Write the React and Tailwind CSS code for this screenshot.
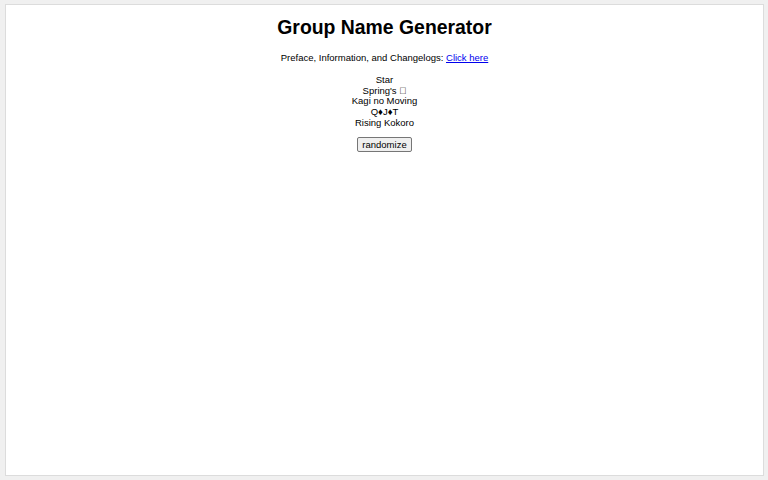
export default function App() {
  return (
    <div className="h-[480px] w-[768px] bg-[#f0f0f0] pt-[4px] pl-[5px] pr-[4px] pb-[4px] font-['Liberation_Sans',Arial,sans-serif] text-black">
      <div className="h-[472px] border border-[#dcdcdc] bg-white flex flex-col items-center text-[9.5px] leading-[10.75px]">
        <h1 className="mt-[11px] text-[19.4px] leading-[23px] font-bold">Group Name Generator</h1>
        <p className="mt-[14px]">
          Preface, Information, and Changelogs:{" "}
          <a href="#" className="text-[#0000ee] underline">Click here</a>
        </p>
        <div className="mt-[11px] flex flex-col items-center">
          <div>Star</div>
          <div>Spring's {"\uE000"}</div>
          <div>Kagi no Moving</div>
          <div>Q♦J♦T</div>
          <div>Rising Kokoro</div>
        </div>
        <button className="mt-[8px] px-[4px] h-[15px] border border-[#767676] rounded-[2px] bg-[#efefef] text-[9.5px] leading-[11px]">randomize</button>
      </div>
    </div>
  );
}
